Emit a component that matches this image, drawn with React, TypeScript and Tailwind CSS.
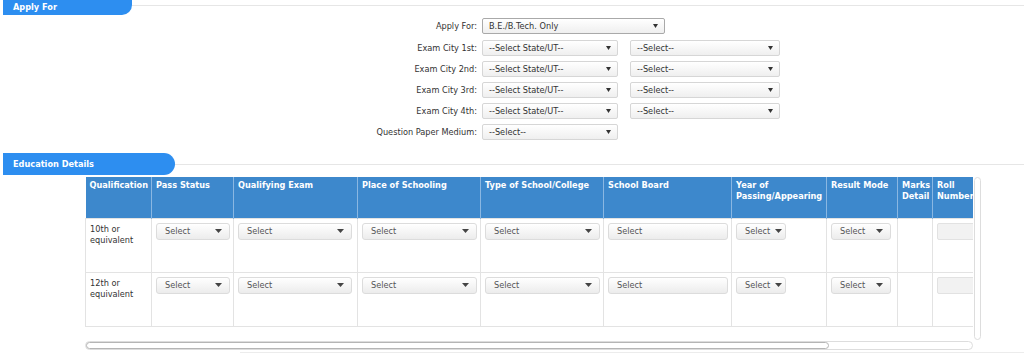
import React from "react";

const font = "font-['DejaVu_Sans',Verdana,'Liberation_Sans',sans-serif]";

type Col = { title: string[]; w: number; cell: "text" | "select" | "input" | "grey" | "none"; selW?: number; compact?: boolean };

const cols: Col[] = [
  { title: ["Qualification"], w: 66, cell: "text" },
  { title: ["Pass Status"], w: 82, cell: "select", selW: 74 },
  { title: ["Qualifying Exam"], w: 124, cell: "select", selW: 114 },
  { title: ["Place of Schooling"], w: 123, cell: "select", selW: 115 },
  { title: ["Type of School/College"], w: 123, cell: "select", selW: 115 },
  { title: ["School Board"], w: 128, cell: "input", selW: 120 },
  { title: ["Year of", "Passing/Appearing"], w: 95, cell: "select", selW: 50, compact: true },
  { title: ["Result Mode"], w: 71, cell: "select", selW: 60 },
  { title: ["Marks", "Detail"], w: 35, cell: "none" },
  { title: ["Roll", "Number"], w: 80, cell: "grey", selW: 70 },
];

const rows = [
  ["10th or", "equivalent"],
  ["12th or", "equivalent"],
];

function Arrow() {
  return (
    <svg width="7" height="4" viewBox="0 0 7 4" className="shrink-0">
      <path d="M0 0 L7 0 L3.5 4 Z" fill="#444" />
    </svg>
  );
}

function FormSelect({ w, text, dark }: { w: number; text: string; dark?: boolean }) {
  return (
    <div
      className={`flex h-[16px] items-center justify-between rounded-[2px] border bg-gradient-to-b from-white to-[#efefef] pl-[6px] pr-[6px] text-[#333] ${
        dark ? "border-[#a9a9a9]" : "border-[#d6d6d6]"
      }`}
      style={{ width: w }}
    >
      <span>{text}</span>
      <svg width="5" height="4" viewBox="0 0 5 4">
        <path d="M0 0 L5 0 L2.5 4 Z" fill="#333" />
      </svg>
    </div>
  );
}

function CellSelect({ w, compact }: { w: number; compact?: boolean }) {
  return (
    <div
      className={`flex h-[17px] items-center rounded-[3px] border border-[#dcdcdc] bg-gradient-to-b from-white to-[#ececec] pl-[8px] text-[#555] ${
        compact ? "gap-[5px]" : "justify-between pr-[7px]"
      }`}
      style={{ width: w }}
    >
      <span>Select</span>
      <Arrow />
    </div>
  );
}

const formRows = [
  { label: "Exam City 1st:" },
  { label: "Exam City 2nd:" },
  { label: "Exam City 3rd:" },
  { label: "Exam City 4th:" },
];

export default function App() {
  const tableW = cols.reduce((s, c) => s + c.w, 0);
  return (
    <div className={`${font} h-[356px] w-[1024px] overflow-hidden bg-white text-[8.2px] leading-[11px] text-[#333]`}>
      {/* Apply For header */}
      <div className="flex items-start">
        <div className="ml-[3px] flex h-[15px] w-[129px] items-center rounded-br-[10px] bg-[#2d8ef0] pl-[10px] font-bold text-white">
          Apply For
        </div>
        <div className="mt-[5px] h-px flex-1 bg-[#e6e6e6]" />
      </div>

      {/* Form */}
      <div className="mt-[3px] grid grid-cols-[477px_auto] gap-x-[5px] gap-y-[5px]">
        <div className="flex h-[17px] items-center justify-end">Apply For:</div>
        <div className="h-[17px]">
          <FormSelect w={183} text="B.E./B.Tech. Only" dark />
        </div>
        {formRows.map((r) => (
          <React.Fragment key={r.label}>
            <div className="flex h-[16px] items-center justify-end">{r.label}</div>
            <div className="flex h-[16px] gap-[12px]">
              <FormSelect w={136} text="--Select State/UT--" />
              <FormSelect w={150} text="--Select--" />
            </div>
          </React.Fragment>
        ))}
        <div className="flex h-[16px] items-center justify-end">Question Paper Medium:</div>
        <div className="h-[16px]">
          <FormSelect w={136} text="--Select--" />
        </div>
      </div>

      {/* Education Details header */}
      <div className="mt-[13px] flex items-center">
        <div className="ml-[3px] flex h-[22px] w-[172px] items-center rounded-r-[11px] bg-[#2d8ef0] pl-[10px] font-bold text-white">
          Education Details
        </div>
        <div className="h-px flex-1 bg-[#e6e6e6]" />
      </div>

      {/* Table */}
      <div className="ml-[85px] mt-[2px] w-[896px]">
        <div className="flex">
          <div className="h-[163px] w-[888px] overflow-hidden">
            <table className="table-fixed border-collapse" style={{ width: tableW }}>
              <colgroup>
                {cols.map((c, i) => (
                  <col key={i} style={{ width: c.w }} />
                ))}
              </colgroup>
              <thead>
                <tr className="h-[41px] bg-[#3d88cc] text-white">
                  {cols.map((c, i) => (
                    <th
                      key={i}
                      className="border-l border-[#8ab7e2] px-[4px] pt-[3px] text-left align-top font-bold whitespace-nowrap first:border-l-0"
                    >
                      {c.title.map((t) => (
                        <div key={t}>{t}</div>
                      ))}
                    </th>
                  ))}
                </tr>
              </thead>
              <tbody>
                {rows.map((r, ri) => (
                  <tr key={ri} className="h-[54px]">
                    {cols.map((c, i) => (
                      <td key={i} className="border border-[#e3e3e3] px-[4px] pt-[4px] align-top">
                        {c.cell === "text" && (
                          <div className="pt-[1px]">
                            <div>{r[0]}</div>
                            <div>{r[1]}</div>
                          </div>
                        )}
                        {c.cell === "select" && <CellSelect w={c.selW!} compact={c.compact} />}
                        {c.cell === "input" && (
                          <div
                            className="flex h-[17px] items-center rounded-[3px] border border-[#dcdcdc] bg-gradient-to-b from-white to-[#ececec] pl-[8px] text-[#555]"
                            style={{ width: c.selW }}
                          >
                            Select
                          </div>
                        )}
                        {c.cell === "grey" && (
                          <div className="h-[17px] rounded-[2px] border border-[#e2e2e2] bg-[#f2f2f2]" style={{ width: c.selW }} />
                        )}
                      </td>
                    ))}
                  </tr>
                ))}
              </tbody>
            </table>
          </div>
          {/* vertical scrollbar */}
          <div className="ml-[1px] h-[163px] w-[7px] rounded-[4px] border border-[#dddddd] bg-white" />
        </div>
        {/* horizontal scrollbar */}
        <div className="mt-[1px] h-[9px] w-[888px] rounded-[5px] border border-[#dddddd] bg-white">
          <div className="h-full w-[743px] rounded-[5px] border border-[#b5b5b5] bg-white" />
        </div>
      </div>
      <div className="mt-[2px] ml-[240px] h-px bg-[#ececec]" />
    </div>
  );
}
